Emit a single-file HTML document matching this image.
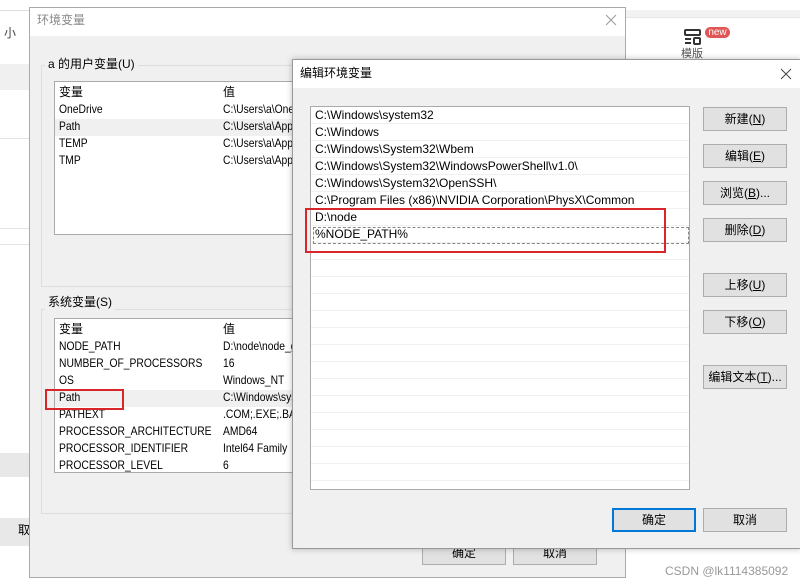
<!DOCTYPE html>
<html><head><meta charset="utf-8"><style>
*{box-sizing:border-box;margin:0;padding:0}
body{width:800px;height:581px;overflow:hidden;background:#fff;position:relative;font-family:"Liberation Sans","Noto Sans CJK SC",sans-serif;font-size:12px;color:#000}
.a{position:absolute}
.t{position:absolute;white-space:nowrap;line-height:17px}
.s{transform:scaleX(.86);transform-origin:left}
.btn{position:absolute;background:#e1e1e1;border:1px solid #adadad;text-align:center;line-height:22px;font-size:12px}
.row{position:absolute;left:0;right:0;height:17px;border-bottom:1px solid #f0f0f0}
</style></head><body>
<div class="a" style="left:0;top:10px;width:30px;height:1px;background:#ddd"></div>
<div class="t" style="left:4px;top:25px;color:#444">小</div>
<div class="a" style="left:0;top:64px;width:30px;height:26px;background:#f0f0f0"></div>
<div class="a" style="left:0;top:138px;width:30px;height:1px;background:#e4e4e4"></div>
<div class="a" style="left:0;top:228px;width:30px;height:1px;background:#e4e4e4"></div>
<div class="a" style="left:0;top:244px;width:30px;height:1px;background:#e4e4e4"></div>
<div class="a" style="left:0;top:453px;width:30px;height:24px;background:#e8e8e8"></div>
<div class="a" style="left:0;top:518px;width:30px;height:28px;background:#e8e8e8"></div>
<div class="t" style="left:18px;top:522px">取</div>
<div class="a" style="left:626px;top:10px;width:174px;height:8px;background:#f2f2f2;border-bottom:1px solid #e6e6e6"></div>
<div class="a" style="left:626px;top:59px;width:174px;height:1px;background:#ccc"></div>
<svg class="a" style="left:684px;top:29px" width="18" height="16" viewBox="0 0 18 16"><rect x="1" y="1" width="15" height="5" rx="1" fill="none" stroke="#333" stroke-width="2"/><rect x="1" y="9" width="6" height="2" fill="#333"/><rect x="1" y="13" width="6" height="2" fill="#333"/><rect x="10" y="9" width="6" height="6" rx="1" fill="none" stroke="#333" stroke-width="2"/></svg>
<div class="a" style="left:705px;top:27px;width:25px;height:11px;border-radius:6px;background:#e05555;color:#fff;font-size:10px;line-height:11px;text-align:center">new</div>
<div class="t" style="left:681px;top:46px;color:#555;font-size:11px">模版</div>
<div class="a" style="left:29px;top:7px;width:597px;height:571px;background:#f0f0f0;border:1px solid #aaa">
 <div class="a" style="left:0;top:0;right:0;height:28px;background:#fff"></div>
 <div class="t" style="left:7px;top:4px;color:#888">环境变量</div>
 <svg class="a" style="left:575px;top:6px" width="12" height="12" viewBox="0 0 12 12"><path d="M1 1L11 11M11 1L1 11" stroke="#999" stroke-width="1"/></svg>
 <div class="a" style="left:11px;top:57px;width:560px;height:222px;border:1px solid #ddd"></div>
 <div class="t" style="left:15px;top:48px;background:#f0f0f0;padding:0 3px">a 的用户变量(U)</div>
 <div class="a" style="left:24px;top:73px;width:300px;height:154px;background:#fff;border:1px solid #aaa">
  <div class="t" style="left:4px;top:2px">变量</div><div class="t" style="left:168px;top:2px">值</div>
  <div class="t s" style="left:4px;top:19px">OneDrive</div><div class="t s" style="left:168px;top:19px">C:\Users\a\OneDrive</div>
  <div class="a" style="left:0;top:37px;width:300px;height:17px;background:#f0f0f0"></div>
  <div class="t s" style="left:4px;top:36px">Path</div><div class="t s" style="left:168px;top:36px">C:\Users\a\AppData</div>
  <div class="t s" style="left:4px;top:53px">TEMP</div><div class="t s" style="left:168px;top:53px">C:\Users\a\AppData</div>
  <div class="t s" style="left:4px;top:70px">TMP</div><div class="t s" style="left:168px;top:70px">C:\Users\a\AppData</div>
 </div>
 <div class="a" style="left:11px;top:301px;width:560px;height:205px;border:1px solid #ddd"></div>
 <div class="t" style="left:15px;top:286px;background:#f0f0f0;padding:0 3px">系统变量(S)</div>
 <div class="a" style="left:24px;top:310px;width:300px;height:155px;background:#fff;border:1px solid #aaa;overflow:hidden">
  <div class="t" style="left:4px;top:2px">变量</div><div class="t" style="left:168px;top:2px">值</div>
  <div class="t s" style="left:4px;top:19px">NODE_PATH</div><div class="t s" style="left:168px;top:19px">D:\node\node_global</div>
  <div class="t s" style="left:4px;top:36px">NUMBER_OF_PROCESSORS</div><div class="t s" style="left:168px;top:36px">16</div>
  <div class="t s" style="left:4px;top:53px">OS</div><div class="t s" style="left:168px;top:53px">Windows_NT</div>
  <div class="a" style="left:0;top:71px;width:300px;height:17px;background:#f0f0f0"></div>
  <div class="t s" style="left:4px;top:70px">Path</div><div class="t s" style="left:168px;top:70px">C:\Windows\system</div>
  <div class="t s" style="left:4px;top:87px">PATHEXT</div><div class="t s" style="left:168px;top:87px">.COM;.EXE;.BAT</div>
  <div class="t s" style="left:4px;top:104px">PROCESSOR_ARCHITECTURE</div><div class="t s" style="left:168px;top:104px">AMD64</div>
  <div class="t s" style="left:4px;top:121px">PROCESSOR_IDENTIFIER</div><div class="t s" style="left:168px;top:121px">Intel64 Family</div>
  <div class="t s" style="left:4px;top:138px">PROCESSOR_LEVEL</div><div class="t s" style="left:168px;top:138px">6</div>
 </div>
 <div class="a" style="left:15px;top:381px;width:79px;height:21px;border:2px solid #d9262b"></div>
 <div class="btn" style="left:392px;top:533px;width:84px;height:24px">确定</div>
 <div class="btn" style="left:483px;top:533px;width:84px;height:24px">取消</div>
</div>
<div class="a" style="left:292px;top:59px;width:509px;height:490px;background:#f0f0f0;border:1px solid #999;box-shadow:0 0 6px rgba(0,0,0,.25)">
 <div class="a" style="left:0;top:0;right:0;height:28px;background:#fff"></div>
 <div class="t" style="left:7px;top:5px">编辑环境变量</div>
 <svg class="a" style="left:487px;top:8px" width="12" height="12" viewBox="0 0 12 12"><path d="M1 1L11 11M11 1L1 11" stroke="#444" stroke-width="1"/></svg>
 <div class="a" style="left:17px;top:46px;width:380px;height:384px;background:#fff;border:1px solid #aaa;overflow:hidden">
  <div class="row" style="top:0"></div><div class="row" style="top:17px"></div><div class="row" style="top:34px"></div><div class="row" style="top:51px"></div><div class="row" style="top:68px"></div><div class="row" style="top:85px"></div><div class="row" style="top:102px"></div><div class="row" style="top:119px"></div><div class="row" style="top:136px"></div><div class="row" style="top:153px"></div><div class="row" style="top:170px"></div><div class="row" style="top:187px"></div><div class="row" style="top:204px"></div><div class="row" style="top:221px"></div><div class="row" style="top:238px"></div><div class="row" style="top:255px"></div><div class="row" style="top:272px"></div><div class="row" style="top:289px"></div><div class="row" style="top:306px"></div><div class="row" style="top:323px"></div><div class="row" style="top:340px"></div><div class="row" style="top:357px"></div>
  <div class="t" style="left:4px;top:0">C:\Windows\system32</div>
  <div class="t" style="left:4px;top:17px">C:\Windows</div>
  <div class="t" style="left:4px;top:34px">C:\Windows\System32\Wbem</div>
  <div class="t" style="left:4px;top:51px">C:\Windows\System32\WindowsPowerShell\v1.0\</div>
  <div class="t" style="left:4px;top:68px">C:\Windows\System32\OpenSSH\</div>
  <div class="t" style="left:4px;top:85px">C:\Program Files (x86)\NVIDIA Corporation\PhysX\Common</div>
  <div class="t" style="left:4px;top:102px">D:\node</div>
  <div class="a" style="left:2px;top:120px;width:376px;height:17px;border:1px dashed #888"></div>
  <div class="t" style="left:4px;top:119px">%NODE_PATH%</div>
 </div>
 <div class="a" style="left:12px;top:148px;width:361px;height:45px;border:2px solid #d9262b"></div>
 <div class="btn" style="left:410px;top:47px;width:84px;height:24px">新建(<u>N</u>)</div>
 <div class="btn" style="left:410px;top:84px;width:84px;height:24px">编辑(<u>E</u>)</div>
 <div class="btn" style="left:410px;top:121px;width:84px;height:24px">浏览(<u>B</u>)...</div>
 <div class="btn" style="left:410px;top:158px;width:84px;height:24px">删除(<u>D</u>)</div>
 <div class="btn" style="left:410px;top:213px;width:84px;height:24px">上移(<u>U</u>)</div>
 <div class="btn" style="left:410px;top:250px;width:84px;height:24px">下移(<u>O</u>)</div>
 <div class="btn" style="left:410px;top:305px;width:84px;height:24px">编辑文本(<u>T</u>)...</div>
 <div class="btn" style="left:319px;top:448px;width:84px;height:24px;border:2px solid #0078d7;line-height:20px">确定</div>
 <div class="btn" style="left:410px;top:448px;width:84px;height:24px">取消</div>
</div>
<div class="t" style="left:665px;top:563px;color:#999;font-size:12px">CSDN @lk1114385092</div>
</body></html>
